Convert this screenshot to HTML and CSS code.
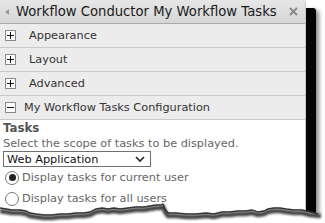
FILE: index.html
```html
<!DOCTYPE html>
<html lang="en">
<head>
    <meta charset="UTF-8">
    <title>Workflow Conductor My Workflow Tasks</title>
    <link rel="stylesheet" href="styles.css">
</head>
<body>
    <div class="page">
        <div class="webpart">
            <div class="title-bar">
                <svg class="arrow" width="4" height="6" viewBox="0 0 4 6"><polygon points="4,0 4,6 0,3" fill="#9a9a9a"/></svg>
                <span class="title">Workflow Conductor My Workflow Tasks</span>
                <svg class="close" width="9" height="9" viewBox="0 0 9 9"><path d="M1 1 L8 8 M8 1 L1 8" stroke="#8a8a8a" stroke-width="2"/></svg>
            </div>

            <div class="section">
                <span class="toggle"><svg width="7" height="7" viewBox="0 0 7 7"><path d="M0 3.5 H7 M3.5 0 V7" stroke="#111" stroke-width="1"/></svg></span>
                <span class="section-name">Appearance</span>
            </div>
            <div class="section">
                <span class="toggle"><svg width="7" height="7" viewBox="0 0 7 7"><path d="M0 3.5 H7 M3.5 0 V7" stroke="#111" stroke-width="1"/></svg></span>
                <span class="section-name">Layout</span>
            </div>
            <div class="section">
                <span class="toggle"><svg width="7" height="7" viewBox="0 0 7 7"><path d="M0 3.5 H7 M3.5 0 V7" stroke="#111" stroke-width="1"/></svg></span>
                <span class="section-name">Advanced</span>
            </div>
            <div class="section open">
                <span class="toggle"><svg width="7" height="7" viewBox="0 0 7 7"><path d="M0 3.5 H7" stroke="#111" stroke-width="1"/></svg></span>
                <span class="section-name">My Workflow Tasks Configuration</span>
            </div>

            <div class="config">
                <div class="field-label">Tasks</div>
                <div class="field-desc">Select the scope of tasks to be displayed.</div>
                <div class="select">
                    <span>Web Application</span>
                    <svg width="10" height="7" viewBox="0 0 10 7"><path d="M1 1 L5 5 L9 1" fill="none" stroke="#222" stroke-width="1.6"/></svg>
                </div>
                <div class="radio">
                    <span class="radio-dot checked"></span>
                    <span>Display tasks for current user</span>
                </div>
                <div class="radio">
                    <span class="radio-dot"></span>
                    <span>Display tasks for all users</span>
                </div>
            </div>
        </div>

        <!-- torn paper edge over the bottom of the panel -->
        <svg class="torn" width="325" height="28" viewBox="0 195 325 28">
            <defs>
                <filter id="soft" x="-5%" y="-50%" width="110%" height="200%">
                    <feGaussianBlur stdDeviation="1.3"/>
                </filter>
            </defs>
            <path d="M0 208 L6 209 L12 210 L20 210 L26 211 L30 213 L36 214 L44 215 L52 215 L60 214 L68 214 L76 213 L84 213 L90 212 L96 209 L102 208 L108 209 L114 208 L120 209 L128 208 L136 207 L144 207 L150 206 L156 205 L160 205 L163 204 L165 209 L168 213 L176 213 L186 214 L196 214 L206 213 L214 214 L222 212 L230 212 L238 211 L246 211 L252 210 L258 212 L264 211 L268 209 L274 208 L280 208 L286 209 L294 210 L302 210 L310 212 L318 214 L325 214 L325 225 L0 225 Z" fill="#fff"/>
            <path d="M0 211 L6 212 L12 213 L20 213 L26 214 L30 216 L36 217 L44 218 L52 218 L60 217 L68 217 L76 216 L84 216 L90 215 L96 212 L102 211 L108 212 L114 211 L120 212 L128 211 L136 210 L144 210 L150 209 L156 208 L160 208 L163 207 L165 212 L168 216 L176 216 L186 217 L196 217 L206 216 L214 217 L222 215 L230 215 L238 214 L246 214 L252 213 L258 215 L264 214 L268 212 L274 211 L280 211 L286 212 L294 213 L302 213 L310 215 L321 216" fill="none" stroke="#444" stroke-width="4.5" filter="url(#soft)"/>
            <path d="M0 208 L6 209 L12 210 L20 210 L26 211 L30 213 L36 214 L44 215 L52 215 L60 214 L68 214 L76 213 L84 213 L90 212 L96 209 L102 208 L108 209 L114 208 L120 209 L128 208 L136 207 L144 207 L150 206 L156 205 L160 205 L163 204 L165 209 L168 213 L176 213 L186 214 L196 214 L206 213 L214 214 L222 212 L230 212 L238 211 L246 211 L252 210 L258 212 L264 211 L268 209 L274 208 L280 208 L286 209 L294 210 L302 210 L310 212 L318 214" fill="none" stroke="#333" stroke-width="1.3"/>
        </svg>
    </div>
</body>
</html>
```

FILE: styles.css
```css
body {
    margin: 0;
    background: #fff;
    font-family: "DejaVu Sans", Verdana, sans-serif;
    color: #333;
}

.page {
    position: relative;
    width: 325px;
    height: 223px;
    overflow: hidden;
}

.webpart {
    width: 306px;
    height: 223px;
    background: #fff;
    border-right: 1px solid #c8c8c8;
    box-sizing: border-box;
    border-radius: 0 3px 0 0;
    box-shadow: 10px 8px 0 #050505, 13px 10px 4px rgba(0, 0, 0, 0.45);
}

/* title bar */
.title-bar {
    height: 23px;
    display: flex;
    align-items: center;
    background: linear-gradient(#e6e6e6, #d6d6d6);
    border-bottom: 1px solid #a9a9a9;
    padding-left: 5px;
}
.arrow {
    flex-shrink: 0;
}
.title {
    margin-left: 7px;
    font-size: 13.2px;
    color: #1a1a1a;
    white-space: nowrap;
}
.close {
    margin-left: auto;
    margin-right: 7px;
    flex-shrink: 0;
}

/* collapsible sections */
.section {
    height: 23px;
    display: flex;
    align-items: center;
    background: #ececec;
    border-bottom: 1px solid #c9c9c9;
    padding-left: 5px;
    font-size: 11.3px;
    color: #333;
}
.toggle {
    width: 9px;
    height: 9px;
    border: 1px solid #888;
    background: #fff;
    display: flex;
    align-items: center;
    justify-content: center;
    flex-shrink: 0;
}
.section-name {
    margin-left: 13px;
}
.section.open .section-name {
    margin-left: 8px;
}

/* configuration body */
.config {
    padding: 1px 3px 0;
    font-size: 11.3px;
    color: #666;
}
.field-label {
    font-weight: bold;
    font-size: 11.8px;
    color: #555;
    line-height: 15px;
}
.field-desc {
    line-height: 15px;
}
.select {
    width: 148px;
    height: 16px;
    border: 1px solid #707070;
    box-sizing: border-box;
    display: flex;
    align-items: center;
    justify-content: space-between;
    padding: 0 5px 0 3px;
    color: #111;
}
.radio {
    display: flex;
    align-items: center;
    height: 21px;
    padding-left: 2px;
}
.radio-dot {
    width: 12px;
    height: 12px;
    border: 1px solid #777;
    border-radius: 50%;
    background: #fff;
    margin-right: 3px;
    flex-shrink: 0;
    display: flex;
    align-items: center;
    justify-content: center;
}
.radio-dot.checked::after {
    content: "";
    width: 7px;
    height: 7px;
    border-radius: 50%;
    background: #222;
}

.torn {
    position: absolute;
    left: 0;
    top: 195px;
}
```
